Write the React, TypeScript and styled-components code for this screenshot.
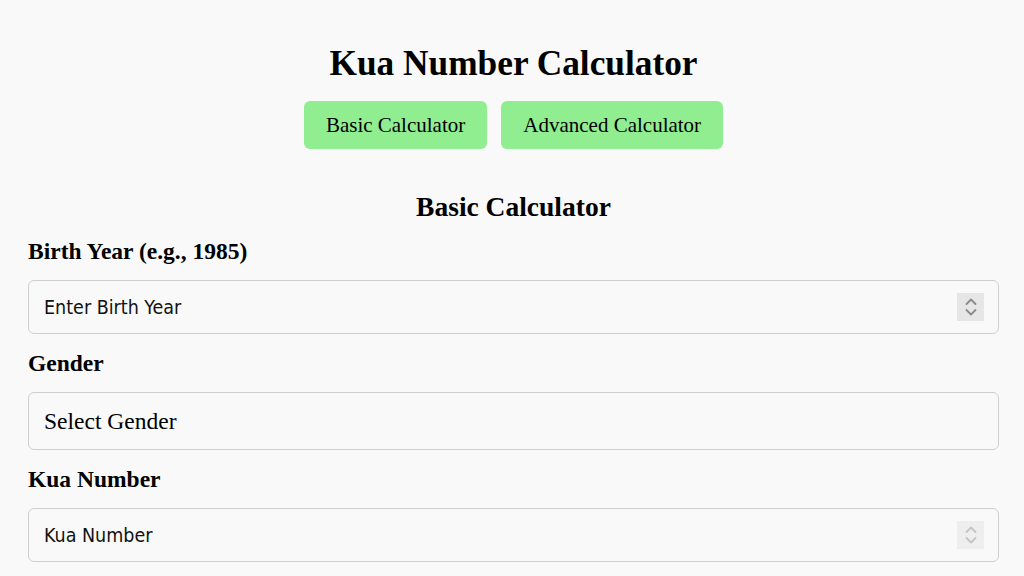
import React, { useState } from 'react';
import styled, { createGlobalStyle } from 'styled-components';

const GlobalStyle = createGlobalStyle`
  html, body {
    margin: 0;
    padding: 0;
    background: #f9f9f9;
    font-family: "Liberation Serif", "Times New Roman", serif;
    color: #000;
  }
`;

const Page = styled.div`
  padding: 44px 25px 20px 28px;
`;

const Title = styled.h1`
  margin: 0;
  text-align: center;
  font-size: 35.3px;
  line-height: 40px;
  font-weight: bold;
`;

const Tabs = styled.div`
  display: flex;
  justify-content: center;
  gap: 14px;
  margin-top: 17px;
`;

const TabButton = styled.button<{ $active?: boolean }>`
  height: 48px;
  padding: 0 22px;
  border: none;
  border-radius: 6px;
  background: #90ee90;
  font-family: "Liberation Serif", "Times New Roman", serif;
  font-size: 21px;
  color: #000;
  cursor: pointer;
`;

const SectionTitle = styled.h2`
  margin: 42px 0 16px;
  text-align: center;
  font-size: 27.5px;
  line-height: 31px;
  font-weight: bold;
`;

const Form = styled.div`
  display: flex;
  flex-direction: column;
`;

const Label = styled.label`
  display: block;
  font-size: 23.5px;
  line-height: 27px;
  font-weight: bold;
  margin-bottom: 15px;
`;

const Field = styled.div<{ $tall?: boolean }>`
  display: flex;
  align-items: center;
  height: ${p => (p.$tall ? 58 : 54)}px;
  box-sizing: border-box;
  padding: 0 14px 0 15px;
  border: 1px solid #cfcfcf;
  border-radius: 6px;
  background: #f9f9f9;
  margin-bottom: 16px;
`;

const TextInput = styled.input`
  flex: 1;
  min-width: 0;
  border: none;
  outline: none;
  background: transparent;
  padding: 0;
  font-family: "DejaVu Sans Condensed", "DejaVu Sans", sans-serif;
  font-size: 19.5px;
  color: #111;

  &::placeholder {
    color: #111;
    opacity: 1;
  }
`;

const Select = styled.select`
  flex: 1;
  appearance: none;
  border: none;
  outline: none;
  background: transparent;
  padding: 0;
  font-family: "Liberation Serif", "Times New Roman", serif;
  font-size: 23.5px;
  color: #000;
`;

const SpinBox = styled.div<{ $muted?: boolean }>`
  width: 27px;
  height: 28px;
  display: flex;
  align-items: center;
  justify-content: center;
  background: ${p => (p.$muted ? '#eeeeee' : '#e6e6e6')};
  color: ${p => (p.$muted ? '#c4c4c4' : '#8a8a8a')};
`;

const Spinner: React.FC<{ muted?: boolean }> = ({ muted }) => (
  <SpinBox $muted={muted}>
    <svg width="14" height="22" viewBox="0 0 14 22" fill="none" stroke="currentColor" strokeWidth="1.8" strokeLinecap="round" strokeLinejoin="round">
      <polyline points="2.5,8 7,3.5 11.5,8" />
      <polyline points="2.5,14 7,18.5 11.5,14" />
    </svg>
  </SpinBox>
);

const App: React.FC = () => {
  const [mode, setMode] = useState<'basic' | 'advanced'>('basic');
  const [year, setYear] = useState('');
  const [gender, setGender] = useState('');

  return (
    <>
      <GlobalStyle />
      <Page>
        <Title>Kua Number Calculator</Title>
        <Tabs>
          <TabButton type="button" $active={mode === 'basic'} onClick={() => setMode('basic')}>Basic Calculator</TabButton>
          <TabButton type="button" $active={mode === 'advanced'} onClick={() => setMode('advanced')}>Advanced Calculator</TabButton>
        </Tabs>
        <SectionTitle>Basic Calculator</SectionTitle>
        <Form>
          <Label htmlFor="year">Birth Year (e.g., 1985)</Label>
          <Field>
            <TextInput id="year" type="text" inputMode="numeric" placeholder="Enter Birth Year" value={year} onChange={e => setYear(e.target.value)} />
            <Spinner />
          </Field>
          <Label htmlFor="gender">Gender</Label>
          <Field $tall>
            <Select id="gender" value={gender} onChange={e => setGender(e.target.value)}>
              <option value="">Select Gender</option>
              <option value="male">Male</option>
              <option value="female">Female</option>
            </Select>
          </Field>
          <Label htmlFor="kua">Kua Number</Label>
          <Field>
            <TextInput id="kua" type="text" placeholder="Kua Number" readOnly />
            <Spinner muted />
          </Field>
        </Form>
      </Page>
    </>
  );
};

export default App;
